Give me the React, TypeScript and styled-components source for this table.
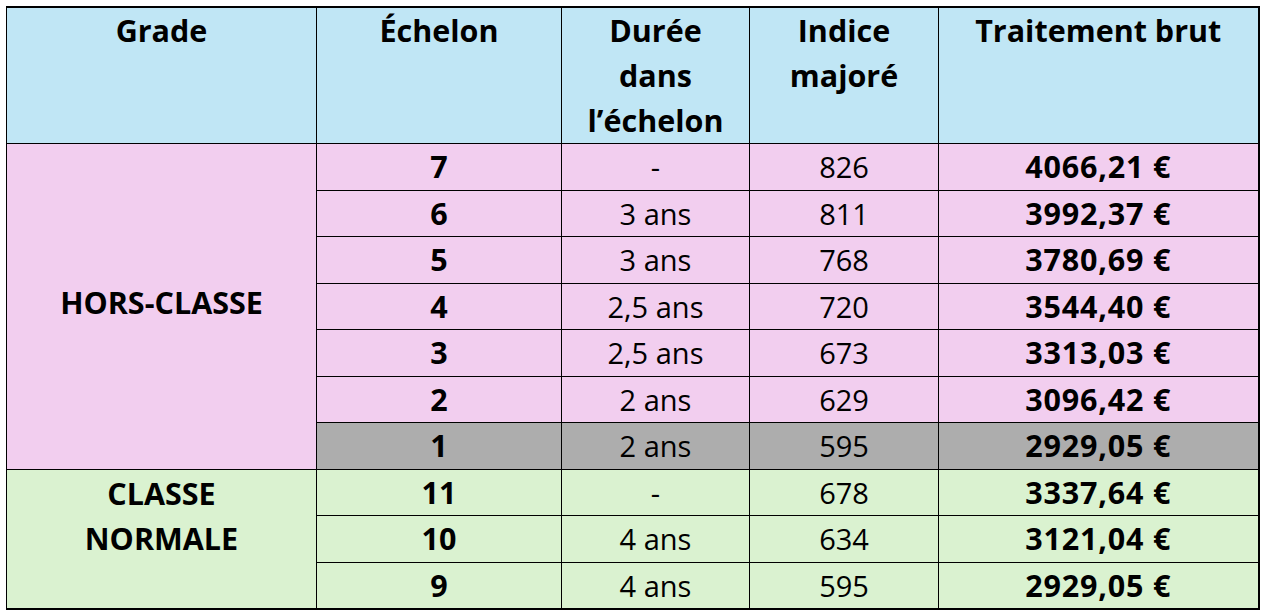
import React from 'react'
import styled, { createGlobalStyle } from 'styled-components'

const GlobalStyle = createGlobalStyle`
    html, body {
        margin: 0;
        padding: 0;
        background: #FFFFFF;
    }
    body {
        font-family: "Open Sans", "Noto Sans", sans-serif;
        color: #000000;
    }
`

const Page = styled.div`
    padding: 6px 0 0 6px;
`

const Table = styled.table`
    border-collapse: collapse;
    table-layout: fixed;
    border-top: 2px solid #000;
    border-right: 2px solid #000;
    border-bottom: 2px solid #000;
    border-left: 1px solid #000;
`

const HeadCell = styled.th`
    height: 135px;
    padding: 0;
    border: 1px solid #000;
    background-color: #C0E6F5;
    font-size: 30.5px;
    font-weight: 700;
    line-height: 45px;
    text-align: center;
    vertical-align: top;
`

const Cell = styled.td<{ $bg: string; $bold?: boolean; $money?: boolean }>`
    height: 45.5px;
    padding: 0;
    border: 1px solid #000;
    background-color: ${p => p.$bg};
    font-size: ${p => (p.$bold ? '30.5px' : '29px')};
    font-weight: ${p => (p.$bold ? 700 : 400)};
    letter-spacing: ${p => (p.$money ? '0.8px' : 'normal')};
    line-height: 45px;
    text-align: center;
    vertical-align: middle;
`

const GradeCell = styled.td<{ $bg: string; $pad?: number }>`
    padding: 0 0 ${p => p.$pad || 0}px 0;
    border: 1px solid #000;
    background-color: ${p => p.$bg};
    font-size: 30.5px;
    font-weight: 700;
    line-height: 45px;
    text-align: center;
    vertical-align: middle;
`

const PINK = '#F2CEEF'
const GRAY = '#ADADAD'
const GREEN = '#DAF2D0'

const columns = [310, 245, 188, 189, 320]

interface Row {
    echelon: string
    duree: string
    indice: string
    brut: string
    bg: string
}

const horsClasse: Row[] = [
    { echelon: '7', duree: '-', indice: '826', brut: '4066,21 €', bg: PINK },
    { echelon: '6', duree: '3 ans', indice: '811', brut: '3992,37 €', bg: PINK },
    { echelon: '5', duree: '3 ans', indice: '768', brut: '3780,69 €', bg: PINK },
    { echelon: '4', duree: '2,5 ans', indice: '720', brut: '3544,40 €', bg: PINK },
    { echelon: '3', duree: '2,5 ans', indice: '673', brut: '3313,03 €', bg: PINK },
    { echelon: '2', duree: '2 ans', indice: '629', brut: '3096,42 €', bg: PINK },
    { echelon: '1', duree: '2 ans', indice: '595', brut: '2929,05 €', bg: GRAY },
]

const classeNormale: Row[] = [
    { echelon: '11', duree: '-', indice: '678', brut: '3337,64 €', bg: GREEN },
    { echelon: '10', duree: '4 ans', indice: '634', brut: '3121,04 €', bg: GREEN },
    { echelon: '9', duree: '4 ans', indice: '595', brut: '2929,05 €', bg: GREEN },
]

const DataCells: React.FC<{ row: Row }> = ({ row }) => (
    <>
        <Cell $bg={row.bg} $bold>{row.echelon}</Cell>
        <Cell $bg={row.bg}>{row.duree}</Cell>
        <Cell $bg={row.bg}>{row.indice}</Cell>
        <Cell $bg={row.bg} $bold $money>{row.brut}</Cell>
    </>
)

const App: React.FC = () => {
    return (
        <Page>
            <GlobalStyle />
            <Table style={{ width: columns.reduce((a, b) => a + b, 0) }}>
                <colgroup>
                    {columns.map((w, i) => <col key={i} style={{ width: w }} />)}
                </colgroup>
                <thead>
                    <tr>
                        <HeadCell>Grade</HeadCell>
                        <HeadCell>Échelon</HeadCell>
                        <HeadCell>Durée<br />dans<br />l’échelon</HeadCell>
                        <HeadCell>Indice<br />majoré</HeadCell>
                        <HeadCell>Traitement brut</HeadCell>
                    </tr>
                </thead>
                <tbody>
                    {horsClasse.map((row, i) => (
                        <tr key={'hc' + i}>
                            {i === 0 && (
                                <GradeCell rowSpan={horsClasse.length} $bg={PINK} $pad={8}>
                                    HORS-CLASSE
                                </GradeCell>
                            )}
                            <DataCells row={row} />
                        </tr>
                    ))}
                    {classeNormale.map((row, i) => (
                        <tr key={'cn' + i}>
                            {i === 0 && (
                                <GradeCell rowSpan={classeNormale.length} $bg={GREEN} $pad={45}>
                                    CLASSE<br />NORMALE
                                </GradeCell>
                            )}
                            <DataCells row={row} />
                        </tr>
                    ))}
                </tbody>
            </Table>
        </Page>
    )
}

export default App
